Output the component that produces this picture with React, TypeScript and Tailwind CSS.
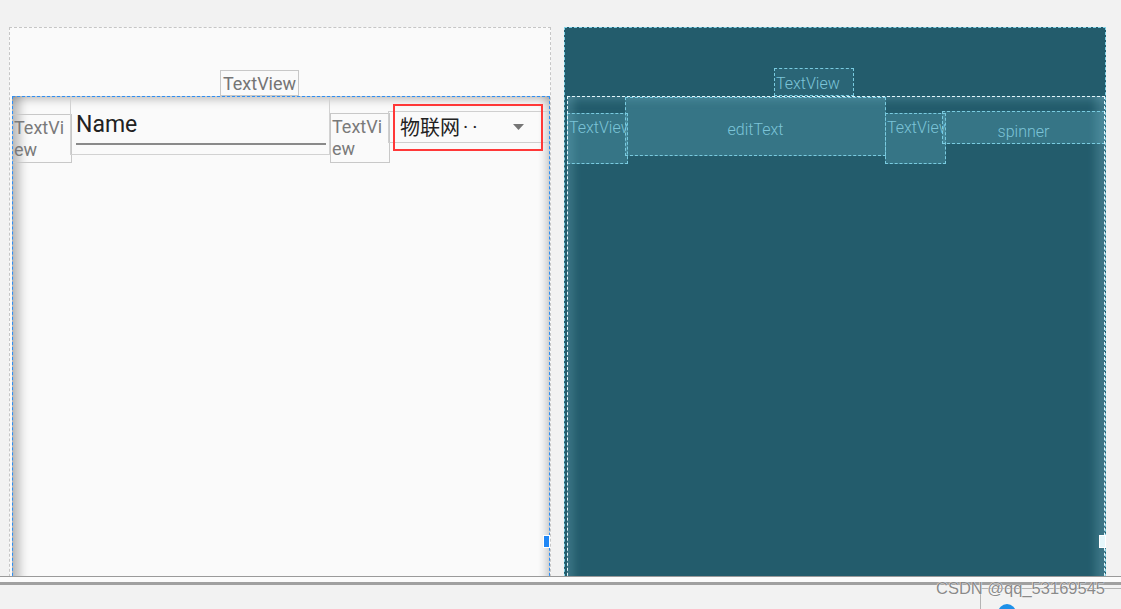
import React from "react";

function Arrow() {
  return (
    <svg width="11" height="6" viewBox="0 0 11 6" className="ml-auto mr-[25px] shrink-0">
      <polygon points="0,0 11,0 5.5,6" fill="#757575" />
    </svg>
  );
}

function LeftPanel() {
  return (
    <div className="w-[542px] h-[600px] shrink-0 border border-dashed border-[#c6c6c6] bg-[#fafafa] flex flex-col">
      <div className="ml-[210px] mt-[42px] w-[79px] h-[26px] border border-[#c8c8c8] flex items-center justify-center text-[18px] text-[#757575] whitespace-nowrap">
        TextView
      </div>
      <div className="relative ml-[2px] w-[538px] h-[520px] flex items-start shadow-[inset_0_10px_9px_-6px_rgba(0,0,0,0.22),inset_14px_0_11px_-7px_rgba(0,0,0,0.28),inset_-10px_0_9px_-6px_rgba(0,0,0,0.2)]">
        <div className="mt-[18px] w-[60px] h-[49px] shrink-0 border border-[#c8c8c8] pl-[1px] pt-[2px] text-[18px] leading-[22px] text-[#7a7a7a] break-all">
          TextView
        </div>
        <div className="-ml-[2px] mt-[1px] w-[260px] h-[58px] shrink-0 border border-[#d2d2d2] pl-[5px] pt-[13px]">
          <div className="text-[23px] leading-[27px] text-[#212121]">Name</div>
          <div className="mt-[5px] w-[250px] h-[2px] bg-[#8a8a8a]" />
        </div>
        <div className="mt-[17px] w-[60px] h-[50px] shrink-0 border border-[#c8c8c8] pl-[1px] pt-[2px] text-[18px] leading-[22px] text-[#7a7a7a] break-all">
          TextView
        </div>
        <div className="-ml-[2px] mt-[15px] flex-1 h-[32px] border border-[#cfcfcf] flex items-center pl-[11px]">
          <span className="text-[20px] leading-[26px] text-[#222] font-['Noto_Sans_CJK_SC',sans-serif] whitespace-nowrap">
            物联网
          </span>
          <span className="ml-[3px] text-[20px] leading-[26px] text-[#222] font-['Roboto',sans-serif] tracking-[4px] whitespace-nowrap">
            ··
          </span>
          <Arrow />
        </div>
        <div className="absolute left-[381px] top-[8px] w-[150px] h-[47px] border-2 border-[#ff3838] pointer-events-none" />
        <div className="absolute inset-0 border border-dashed border-[#2e8ff5] pointer-events-none" />
        <div className="absolute left-[531px] top-[439px] w-[7px] h-[13px] bg-[#2187f5] border border-white" />
      </div>
    </div>
  );
}

function RightPanel() {
  const txt = "text-[16px] font-light text-[#7cc4d8] whitespace-nowrap";
  const box = "border border-dashed border-[#79cbe0] bg-[rgba(110,190,210,0.25)]";
  return (
    <div className="w-[542px] h-[600px] shrink-0 border border-dashed border-[#82d2e6] bg-[#235c6c] flex flex-col">
      <div className={`ml-[209px] mt-[40px] w-[80px] h-[28px] border border-dashed border-[#79cbe0] bg-[rgba(110,190,210,0.1)] flex items-center pl-[1px] pt-[3px] overflow-hidden ${txt}`}>
        TextView
      </div>
      <div className="relative ml-[2px] w-[538px] h-[520px] flex items-start shadow-[inset_0_10px_9px_-6px_rgba(160,220,235,0.22),inset_13px_0_10px_-7px_rgba(160,220,235,0.22),inset_-16px_0_10px_-7px_rgba(160,220,235,0.22)]">
        <div className={`mt-[17px] w-[61px] h-[51px] shrink-0 overflow-hidden pl-[1px] pt-[3px] leading-[22px] ${box} ${txt}`}>
          TextView
        </div>
        <div className={`-ml-[3px] mt-[1px] w-[261px] h-[59px] shrink-0 flex items-center justify-center pt-[6px] ${box} ${txt}`}>
          editText
        </div>
        <div className={`-ml-[1px] mt-[17px] w-[61px] h-[51px] shrink-0 overflow-hidden pl-[1px] pt-[3px] leading-[22px] ${box} ${txt}`}>
          TextView
        </div>
        <div className={`-ml-[4px] mt-[15px] flex-1 h-[33px] flex items-center justify-center pt-[9px] ${box} ${txt}`}>
          spinner
        </div>
        <div className="absolute inset-0 border border-dashed border-[#e6f6fa] pointer-events-none" />
        <div className="absolute left-[532px] top-[439px] w-[7px] h-[13px] bg-[#e6f7fb] border border-white" />
      </div>
    </div>
  );
}

export default function App() {
  return (
    <div className="w-[1121px] h-[609px] bg-[#f2f2f2] overflow-hidden relative font-['Roboto',sans-serif]">
      <div className="h-[576px] overflow-hidden flex items-start pl-[9px] pt-[27px] gap-[13px]">
        <LeftPanel />
        <RightPanel />
      </div>
      <div className="h-px bg-[#9a9a9a]" />
      <div className="h-[5px] bg-[#fbfbfb]" />
      <div className="h-[3px] bg-[#a0a0a0]" />
      <div className="h-[24px] bg-[#f2f2f2]" />
      <div className="absolute left-[980px] top-[588px] right-0 h-px bg-[#b4b4b4]" />
      <div className="absolute left-[980px] top-[588px] bottom-0 w-px bg-[#b4b4b4]" />
      <div className="absolute left-[998px] top-[604px] w-[18px] h-[18px] rounded-full bg-[#1e90e8]" />
      <div className="absolute left-[936px] top-[578px] text-[16.5px] leading-[20px] text-[#8a8a8a] font-['Liberation_Sans',Arial,sans-serif] whitespace-nowrap [text-shadow:0_0_1px_#fff,0_0_1px_#fff]">
        CSDN @qq_53169545
      </div>
    </div>
  );
}
